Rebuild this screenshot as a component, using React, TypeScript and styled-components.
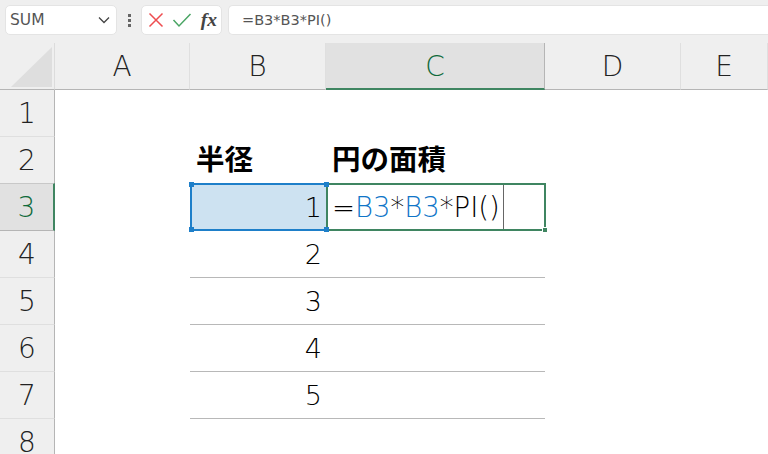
import React from "react"
import styled, { createGlobalStyle } from "styled-components"

const GlobalStyle = createGlobalStyle`
    html, body {
        margin: 0;
        padding: 0;
        background: #fff;
        overflow: hidden;
    }
`
const Page = styled.div`
    width: 768px;
    height: 454px;
    overflow: hidden;
    background: #fff;
    font-family: "DejaVu Sans", sans-serif;
    font-weight: 200;
`
const FormulaBar = styled.div`
    height: 43px;
    box-sizing: border-box;
    padding: 5px 0 8px 5px;
    background: #efefef;
    display: flex;
    align-items: stretch;
`
const Box = styled.div`
    background: #fff;
    border-radius: 5px;
    border: 1px solid #e4e4e4;
    box-sizing: border-box;
    display: flex;
    align-items: center;
    font-weight: 400;
    color: #555;
`
const NameBox = styled(Box)`
    width: 112px;
    padding: 0 6px 0 4px;
    justify-content: space-between;
    font-size: 15.500px;
`
const Dots = styled.div`
    width: 24px;
    display: flex;
    flex-direction: column;
    align-items: center;
    justify-content: center;
    gap: 2px;
    i {
        width: 3px;
        height: 3px;
        background: #666;
        display: block;
    }
`
const ActionBox = styled(Box)`
    width: 81px;
    padding: 0 4px 0 6px;
    justify-content: space-between;
    margin-right: 6px;
`
const Fx = styled.span`
    font-family: "Liberation Serif", serif;
    font-style: italic;
    font-weight: 700;
    font-size: 19.500px;
    color: #444;
`
const FormulaInput = styled(Box)`
    flex: 1;
    padding-left: 13px;
    border-right: 0;
    border-radius: 5px 0 0 5px;
    font-size: 14.500px;
`
const Sheet = styled.div`
    display: grid;
    grid-template-columns: 55px 135px 136px 219px 136px 1fr;
    grid-template-rows: 47px repeat(8, 47px);
`
const Corner = styled.div`
    background: #efefef;
    border-right: 1px solid #dcdcdc;
    border-bottom: 1px solid #b5b5b5;
    box-sizing: border-box;
    position: relative;
    svg {
        position: absolute;
        left: 11px;
        top: 4px;
    }
`
const ColHead = styled.div<{ $active?: boolean }>`
    box-sizing: border-box;
    background: ${({ $active }) => ($active ? "#e1e1e1" : "#efefef")};
    border-right: 1px solid ${({ $active }) => ($active ? "#b5b5b5" : "#dfdfdf")};
    border-bottom: ${({ $active }) =>
        $active ? "2px solid #3f8561" : "1px solid #b5b5b5"};
    color: ${({ $active }) => ($active ? "#0f6a3a" : "#222")};
    font-size: 28px;
    display: flex;
    align-items: center;
    justify-content: center;
    padding-top: ${({ $active }) => ($active ? "1px" : "0")};
`
const RowHead = styled.div<{ $active?: boolean }>`
    box-sizing: border-box;
    background: ${({ $active }) => ($active ? "#e1e1e1" : "#efefef")};
    border-right: ${({ $active }) =>
        $active ? "2px solid #3f8561" : "1px solid #b5b5b5"};
    border-bottom: 1px solid ${({ $active }) => ($active ? "#b5b5b5" : "#dfdfdf")};
    border-top: ${({ $active }) => ($active ? "1px solid #c8c8c8" : "0")};
    margin-top: ${({ $active }) => ($active ? "-1px" : "0")};
    color: ${({ $active }) => ($active ? "#0f6a3a" : "#222")};
    font-size: 28px;
    display: flex;
    align-items: center;
    justify-content: center;
`
const Cell = styled.div<{ $lined?: boolean }>`
    box-sizing: border-box;
    display: flex;
    align-items: center;
    justify-content: flex-end;
    padding-right: 4px;
    font-size: 27px;
    color: #000;
    border-bottom: ${({ $lined }) => ($lined ? "1px solid #b8b8b8" : "0")};
`
const HeadCell = styled.div`
    box-sizing: border-box;
    display: flex;
    align-items: center;
    padding: 0 0 7px 6px;
    font-family: "Noto Sans CJK JP", sans-serif;
    font-weight: 700;
    font-size: 28.500px;
    color: #000;
    white-space: nowrap;
`
const SelectedCell = styled(Cell)`
    background: #cde2f1;
    border: 2px solid #1e7fc9;
    border-right: 0;
    margin-top: -1px;
    height: 48px;
    position: relative;
    z-index: 1;
`
const Handle = styled.span<{ $left?: boolean; $top?: boolean }>`
    position: absolute;
    width: 5px;
    height: 5px;
    background: #1e7fc9;
    ${({ $left }) => ($left ? "left: -3px;" : "right: -3px;")}
    ${({ $top }) => ($top ? "top: -3px;" : "bottom: -3px;")}
`
const EditCell = styled.div`
    box-sizing: border-box;
    margin-top: -1px;
    height: 48px;
    margin-right: -1px;
    border: 2px solid #3f8561;
    position: relative;
    display: flex;
    align-items: center;
    padding-left: 4px;
    font-size: 27.500px;
    color: #000;
    white-space: nowrap;
    span {
        color: #0f75c8;
    }
`
const Caret = styled.i`
    position: absolute;
    left: 175px;
    top: 0;
    bottom: 0;
    width: 1px;
    background: #666;
`
const FillHandle = styled.b`
    position: absolute;
    right: -3px;
    bottom: -3px;
    width: 4px;
    height: 4px;
    background: #3f8561;
    border: 1px solid #fff;
    border-right: 0;
    border-bottom: 0;
`

const columns = ["A", "B", "C", "D", "E"]

const Blank = () => <div />

const App = () => {
    return (
        <Page>
            <GlobalStyle />
            <FormulaBar>
                <NameBox>
                    SUM
                    <svg width="12" height="8" viewBox="0 0 12 8">
                        <path d="M1 1.5l5 5 5-5" fill="none" stroke="#444" strokeWidth="1.3" />
                    </svg>
                </NameBox>
                <Dots>
                    <i />
                    <i />
                    <i />
                </Dots>
                <ActionBox>
                    <svg width="16" height="16" viewBox="0 0 16 16">
                        <path d="M1.500 1.500l13 13M14.500 1.500l-13 13" fill="none" stroke="#ee4d50" strokeWidth="1.5" />
                    </svg>
                    <svg width="20" height="16" viewBox="0 0 20 16">
                        <path d="M1.500 8l5.500 6L18.500 2" fill="none" stroke="#4aa564" strokeWidth="1.5" />
                    </svg>
                    <Fx>fx</Fx>
                </ActionBox>
                <FormulaInput>=B3*B3*PI()</FormulaInput>
            </FormulaBar>
            <Sheet>
                <Corner>
                    <svg width="41" height="40" viewBox="0 0 41 40">
                        <path d="M41 0V40H0z" fill="#dedede" />
                    </svg>
                </Corner>
                {columns.map((c) => (
                    <ColHead key={c} $active={c === "C"}>
                        {c}
                    </ColHead>
                ))}

                <RowHead>1</RowHead>
                <Blank /><Blank /><Blank /><Blank /><Blank />

                <RowHead>2</RowHead>
                <Blank />
                <HeadCell>半径</HeadCell>
                <HeadCell>円の面積</HeadCell>
                <Blank /><Blank />

                <RowHead $active>3</RowHead>
                <Blank />
                <SelectedCell>
                    1
                    <Handle $left $top />
                    <Handle $top />
                    <Handle $left />
                    <Handle />
                </SelectedCell>
                <EditCell>
                    =<span>B3</span>*<span>B3</span>*PI()
                    <Caret />
                    <FillHandle />
                </EditCell>
                <Blank /><Blank />

                {[2, 3, 4, 5].map((n, i) => (
                    <React.Fragment key={n}>
                        <RowHead>{i + 4}</RowHead>
                        <Blank />
                        <Cell $lined>{n}</Cell>
                        <Cell $lined />
                        <Blank /><Blank />
                    </React.Fragment>
                ))}

                <RowHead>8</RowHead>
            </Sheet>
        </Page>
    )
}

export default App
